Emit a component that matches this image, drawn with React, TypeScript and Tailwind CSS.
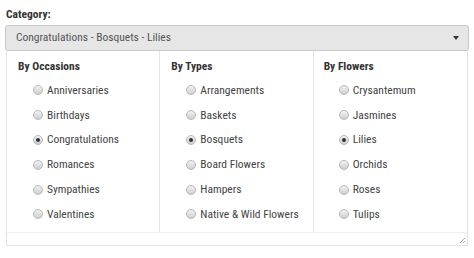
import React from "react";

const columns = [
  {
    title: "By Occasions",
    items: ["Anniversaries", "Birthdays", "Congratulations", "Romances", "Sympathies", "Valentines"],
    checked: "Congratulations",
  },
  {
    title: "By Types",
    items: ["Arrangements", "Baskets", "Bosquets", "Board Flowers", "Hampers", "Native & Wild Flowers"],
    checked: "Bosquets",
  },
  {
    title: "By Flowers",
    items: ["Crysantemum", "Jasmines", "Lilies", "Orchids", "Roses", "Tulips"],
    checked: "Lilies",
  },
];

function Radio({ on }: { on: boolean }) {
  return (
    <span className="relative inline-block h-[10px] w-[10px] shrink-0 rounded-full border border-[#b8b8b8] bg-gradient-to-b from-[#f2f2f2] to-[#cfcfcf]">
      {on && <span className="absolute left-[2px] top-[2px] h-[4px] w-[4px] rounded-full bg-[#333]" />}
    </span>
  );
}

export default function App() {
  return (
    <div
      className="w-[474px] h-[258px] bg-white px-[5px] pt-[6px] text-[#333]"
      style={{ fontFamily: "'Roboto Condensed', Lato, sans-serif" }}
    >
      <div className="text-[11.5px] font-bold leading-[16px] pl-[1px]">Category:</div>
      <div className="mt-[3px] flex h-[26px] items-center justify-between rounded-[3px] border border-[#c9c9c9] bg-[#e6e6e6] pl-[10px] pr-[9px]">
        <span className="text-[11.5px] text-[#555]">Congratulations - Bosquets - Lilies</span>
        <span className="h-0 w-0 border-x-[3.5px] border-t-[4px] border-x-transparent border-t-[#333]" />
      </div>
      <div className="relative mx-[1px] h-[195px] border-x border-b border-[#e3e3e3]">
        <div className="grid h-[182px] grid-cols-3 border-b border-[#efefef]">
          {columns.map((col, i) => (
            <div
              key={col.title}
              className={`pt-[7px] ${i < 2 ? "border-r border-[#e6e6e6]" : ""} ${i === 2 ? "pl-[10px]" : "pl-[11px]"}`}
            >
              <div className="text-[11.5px] font-bold leading-[16px]">{col.title}</div>
              <div className="mt-[4px] flex flex-col pl-[15px]">
                {col.items.map((it) => (
                  <div
                    key={it}
                    className="flex h-[24.8px] items-center gap-[4px] whitespace-nowrap text-[11.5px] text-[#444]"
                  >
                    <Radio on={it === col.checked} />
                    <span>{it}</span>
                  </div>
                ))}
              </div>
            </div>
          ))}
        </div>
        <svg className="absolute bottom-[1px] right-[1px]" width="7" height="7" viewBox="0 0 7 7">
          <path d="M6 1 L1 6 M6 4 L4 6" stroke="#999" strokeWidth="0.8" />
        </svg>
      </div>
    </div>
  );
}
